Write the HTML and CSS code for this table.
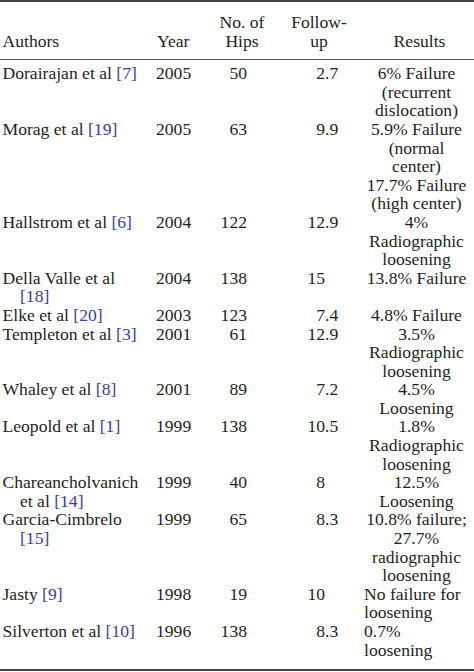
FILE: index.html
```html
<!DOCTYPE html>
<html lang="en">
<head>
<meta charset="utf-8">
<title>Table</title>
<link rel="stylesheet" href="styles.css">
</head>
<body>
<table class="tbl">
  <colgroup>
    <col class="c-auth"><col class="c-year"><col class="c-hips"><col class="c-fu"><col class="c-res">
  </colgroup>
  <thead>
    <tr>
      <th class="auth">Authors</th>
      <th class="year">Year</th>
      <th class="hips">No. of Hips</th>
      <th class="fu">Follow-up</th>
      <th class="res">Results</th>
    </tr>
  </thead>
  <tbody>
    <tr class="first">
      <td class="auth">Dorairajan et al <a class="ref">[7]</a></td>
      <td class="year">2005</td>
      <td class="hips">50</td>
      <td class="fu"><span class="i">2</span><span class="f">.7</span></td>
      <td class="res">6% Failure (recurrent dislocation)</td>
    </tr>
    <tr>
      <td class="auth">Morag et al <a class="ref">[19]</a></td>
      <td class="year">2005</td>
      <td class="hips">63</td>
      <td class="fu"><span class="i">9</span><span class="f">.9</span></td>
      <td class="res">5.9% Failure (normal center)<br>17.7% Failure (high center)</td>
    </tr>
    <tr>
      <td class="auth">Hallstrom et al <a class="ref">[6]</a></td>
      <td class="year">2004</td>
      <td class="hips">122</td>
      <td class="fu"><span class="i">12</span><span class="f">.9</span></td>
      <td class="res">4% Radiographic loosening</td>
    </tr>
    <tr>
      <td class="auth">Della Valle et al <a class="ref">[18]</a></td>
      <td class="year">2004</td>
      <td class="hips">138</td>
      <td class="fu"><span class="i">15</span></td>
      <td class="res">13.8% Failure</td>
    </tr>
    <tr>
      <td class="auth">Elke et al <a class="ref">[20]</a></td>
      <td class="year">2003</td>
      <td class="hips">123</td>
      <td class="fu"><span class="i">7</span><span class="f">.4</span></td>
      <td class="res">4.8% Failure</td>
    </tr>
    <tr>
      <td class="auth">Templeton et al <a class="ref">[3]</a></td>
      <td class="year">2001</td>
      <td class="hips">61</td>
      <td class="fu"><span class="i">12</span><span class="f">.9</span></td>
      <td class="res">3.5% Radiographic loosening</td>
    </tr>
    <tr>
      <td class="auth">Whaley et al <a class="ref">[8]</a></td>
      <td class="year">2001</td>
      <td class="hips">89</td>
      <td class="fu"><span class="i">7</span><span class="f">.2</span></td>
      <td class="res">4.5% Loosening</td>
    </tr>
    <tr>
      <td class="auth">Leopold et al <a class="ref">[1]</a></td>
      <td class="year">1999</td>
      <td class="hips">138</td>
      <td class="fu"><span class="i">10</span><span class="f">.5</span></td>
      <td class="res">1.8% Radiographic loosening</td>
    </tr>
    <tr>
      <td class="auth">Chareancholvanich et al <a class="ref">[14]</a></td>
      <td class="year">1999</td>
      <td class="hips">40</td>
      <td class="fu"><span class="i">8</span></td>
      <td class="res">12.5% Loosening</td>
    </tr>
    <tr>
      <td class="auth">Garcia-Cimbrelo <a class="ref">[15]</a></td>
      <td class="year">1999</td>
      <td class="hips">65</td>
      <td class="fu"><span class="i">8</span><span class="f">.3</span></td>
      <td class="res">10.8% failure; 27.7% radiographic loosening</td>
    </tr>
    <tr>
      <td class="auth">Jasty <a class="ref">[9]</a></td>
      <td class="year">1998</td>
      <td class="hips">19</td>
      <td class="fu"><span class="i">10</span></td>
      <td class="res left">No failure for loosening</td>
    </tr>
    <tr class="last">
      <td class="auth">Silverton et al <a class="ref">[10]</a></td>
      <td class="year">1996</td>
      <td class="hips">138</td>
      <td class="fu"><span class="i">8</span><span class="f">.3</span></td>
      <td class="res left">0.7% loosening</td>
    </tr>
  </tbody>
</table>
</body>
</html>
```
FILE: styles.css
```css
html, body {
  margin: 0;
  padding: 0;
  background: #ffffff;
}
body {
  font-family: "Liberation Serif", "Times New Roman", serif;
  font-size: 17.6px;
  line-height: 18.6px;
  color: #231f20;
}
.tbl {
  width: 474px;
  table-layout: fixed;
  border-collapse: collapse;
  border-top: 2px solid #444444;
  border-bottom: 2px solid #444444;
}
.c-auth { width: 152px; }
.c-year { width: 52px; }
.c-hips { width: 72px; }
.c-fu { width: 86px; }
.c-res { width: 112px; }

th, td {
  padding: 0;
  font-weight: normal;
}
thead th {
  vertical-align: bottom;
  padding-top: 11px;
  padding-bottom: 9px;
  border-bottom: 1px solid #555555;
}
tbody td {
  vertical-align: top;
}
tbody tr.first td { padding-top: 4px; }
tbody tr.last td { padding-bottom: 10px; }

.auth {
  text-align: left;
  padding-left: 20px;
  padding-right: 6px;
  text-indent: -17.5px;
}
th.auth { padding-left: 2.5px; text-indent: 0; }
.year {
  text-align: left;
  padding-left: 4px;
}
th.year { padding-left: 5px; }
th.hips {
  text-align: center;
  padding-left: 0;
  padding-right: 0;
  padding-inline: 0;
}
thead th.hips { padding-left: 6px; padding-right: 2px; }
td.hips {
  text-align: right;
  padding-right: 29px;
}
th.fu {
  text-align: center;
  padding-left: 11px;
  padding-right: 11px;
}
td.fu { text-align: left; white-space: nowrap; }
td.fu .i {
  display: inline-block;
  width: 49px;
  text-align: right;
}
.res {
  text-align: center;
  padding-left: 2px;
  padding-right: 5px;
}
th.res { padding-left: 5px; padding-right: 2px; }
.res.left { text-align: left; }
.ref {
  color: #3b3e9c;
  text-decoration: none;
}
```
